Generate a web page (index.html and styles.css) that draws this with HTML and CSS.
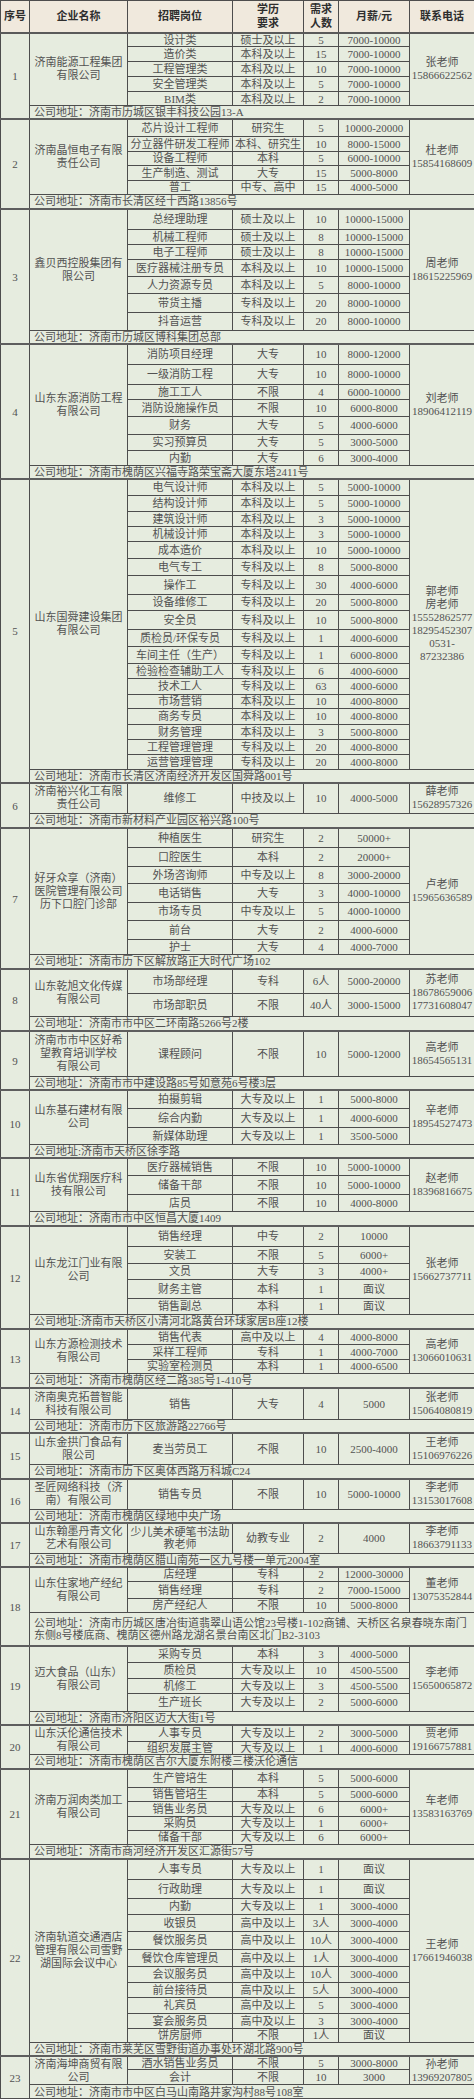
FILE: index.html
```html
<!DOCTYPE html>
<html lang="zh-CN">
<head>
<meta charset="utf-8">
<title>招聘信息</title>
<link rel="stylesheet" href="styles.css">
</head>
<body>
<table class="jobs">
<colgroup>
<col class="c-no"><col class="c-name"><col class="c-job"><col class="c-edu"><col class="c-num"><col class="c-pay"><col class="c-tel">
</colgroup>
<thead>
<tr class="h32"><th>序号</th><th>企业名称</th><th>招聘岗位</th><th>学历<br>要求</th><th>需求<br>人数</th><th>月薪/元</th><th>联系电话</th></tr>
</thead>

<tbody class="co">
<tr class="h14"><td class="no" rowspan="6">1</td><td class="name" rowspan="5">济南能源工程集团<br>有限公司</td><td>设计类</td><td>硕士及以上</td><td>5</td><td>7000-10000</td><td class="tel" rowspan="5">张老师<br>15866622562</td></tr>
<tr class="h15"><td>造价类</td><td>本科及以上</td><td>15</td><td>7000-10000</td></tr>
<tr class="h15"><td>工程管理类</td><td>本科及以上</td><td>10</td><td>7000-10000</td></tr>
<tr class="h15"><td>安全管理类</td><td>本科及以上</td><td>5</td><td>7000-10000</td></tr>
<tr class="h14"><td>BIM类</td><td>本科及以上</td><td>2</td><td>7000-10000</td></tr>
<tr class="h13"><td class="addr" colspan="6">公司地址：济南市历城区银丰科技公园13-A</td></tr>
</tbody>

<tbody class="co">
<tr class="h17"><td class="no" rowspan="6">2</td><td class="name" rowspan="5">济南晶恒电子有限<br>责任公司</td><td>芯片设计工程师</td><td>研究生</td><td>5</td><td>10000-20000</td><td class="tel" rowspan="5">杜老师<br>15854168609</td></tr>
<tr class="h15"><td>分立器件研发工程师</td><td>本科、研究生</td><td>10</td><td>8000-15000</td></tr>
<tr class="h14"><td>设备工程师</td><td>本科</td><td>5</td><td>6000-10000</td></tr>
<tr class="h15"><td>生产制造、测试</td><td>大专</td><td>15</td><td>5000-8000</td></tr>
<tr class="h14"><td>普工</td><td>中专、高中</td><td>15</td><td>4000-5000</td></tr>
<tr class="h15"><td class="addr" colspan="6">公司地址：济南市长清区经十西路13856号</td></tr>
</tbody>

<tbody class="co">
<tr class="h20"><td class="no" rowspan="8">3</td><td class="name" rowspan="7">鑫贝西控股集团有<br>限公司</td><td>总经理助理</td><td>硕士及以上</td><td>10</td><td>10000-15000</td><td class="tel" rowspan="7">周老师<br>18615225969</td></tr>
<tr class="h15"><td>机械工程师</td><td>硕士及以上</td><td>8</td><td>10000-15000</td></tr>
<tr class="h15"><td>电子工程师</td><td>硕士及以上</td><td>8</td><td>10000-15000</td></tr>
<tr class="h17"><td>医疗器械注册专员</td><td>本科及以上</td><td>10</td><td>10000-15000</td></tr>
<tr class="h17"><td>人力资源专员</td><td>本科及以上</td><td>5</td><td>8000-10000</td></tr>
<tr class="h19"><td>带货主播</td><td>专科及以上</td><td>20</td><td>8000-10000</td></tr>
<tr class="h18"><td>抖音运营</td><td>专科及以上</td><td>20</td><td>8000-10000</td></tr>
<tr class="h14"><td class="addr" colspan="6">公司地址：济南市历城区博科集团总部</td></tr>
</tbody>

<tbody class="co">
<tr class="h20"><td class="no" rowspan="8">4</td><td class="name" rowspan="7">山东东源消防工程<br>有限公司</td><td>消防项目经理</td><td>大专</td><td>10</td><td>8000-12000</td><td class="tel" rowspan="7">刘老师<br>18906412119</td></tr>
<tr class="h20"><td>一级消防工程</td><td>大专</td><td>10</td><td>8000-10000</td></tr>
<tr class="h15"><td>施工工人</td><td>不限</td><td>4</td><td>6000-10000</td></tr>
<tr class="h17"><td>消防设施操作员</td><td>不限</td><td>10</td><td>6000-8000</td></tr>
<tr class="h18"><td>财务</td><td>大专</td><td>5</td><td>4000-6000</td></tr>
<tr class="h16"><td>实习预算员</td><td>大专</td><td>5</td><td>3000-5000</td></tr>
<tr class="h15"><td>内勤</td><td>大专</td><td>6</td><td>3000-4000</td></tr>
<tr class="h14"><td class="addr" colspan="6">公司地址：济南市槐荫区兴福寺路荣宝斋大厦东塔2411号</td></tr>
</tbody>

<tbody class="co">
<tr class="h16"><td class="no" rowspan="19">5</td><td class="name" rowspan="18">山东国舜建设集团<br>有限公司</td><td>电气设计师</td><td>本科及以上</td><td>5</td><td>5000-10000</td><td class="tel" rowspan="18">郭老师<br>房老师<br>15552862577<br>18295452307<br>0531-<br>87232386</td></tr>
<tr class="h16"><td>结构设计师</td><td>本科及以上</td><td>5</td><td>5000-10000</td></tr>
<tr class="h15"><td>建筑设计师</td><td>本科及以上</td><td>3</td><td>5000-10000</td></tr>
<tr class="h15"><td>机械设计师</td><td>本科及以上</td><td>3</td><td>5000-10000</td></tr>
<tr class="h17"><td>成本造价</td><td>本科及以上</td><td>10</td><td>5000-10000</td></tr>
<tr class="h17"><td>电气专工</td><td>专科及以上</td><td>8</td><td>5000-8000</td></tr>
<tr class="h19"><td>操作工</td><td>专科及以上</td><td>30</td><td>4000-6000</td></tr>
<tr class="h16"><td>设备维修工</td><td>专科及以上</td><td>20</td><td>5000-8000</td></tr>
<tr class="h19"><td>安全员</td><td>专科及以上</td><td>10</td><td>5000-8000</td></tr>
<tr class="h17"><td>质检员/环保专员</td><td>专科及以上</td><td>1</td><td>4000-6000</td></tr>
<tr class="h17"><td>车间主任（生产）</td><td>专科及以上</td><td>1</td><td>6000-8000</td></tr>
<tr class="h15"><td>检验检查辅助工人</td><td>专科及以上</td><td>6</td><td>4000-6000</td></tr>
<tr class="h16"><td>技术工人</td><td>专科及以上</td><td>63</td><td>4000-6000</td></tr>
<tr class="h14"><td>市场营销</td><td>本科及以上</td><td>10</td><td>4000-8000</td></tr>
<tr class="h16"><td>商务专员</td><td>本科及以上</td><td>10</td><td>4000-8000</td></tr>
<tr class="h15"><td>财务管理</td><td>本科及以上</td><td>3</td><td>5000-8000</td></tr>
<tr class="h15"><td>工程管理管理</td><td>专科及以上</td><td>20</td><td>4000-8000</td></tr>
<tr class="h15"><td>运营管理管理</td><td>专科及以上</td><td>20</td><td>4000-8000</td></tr>
<tr class="h14"><td class="addr" colspan="6">公司地址：济南市长清区济南经济开发区国舜路001号</td></tr>
</tbody>

<tbody class="co">
<tr class="h30"><td class="no" rowspan="2">6</td><td class="name">济南裕兴化工有限<br>责任公司</td><td>维修工</td><td>中技及以上</td><td>10</td><td>4000-5000</td><td class="tel">薛老师<br>15628957326</td></tr>
<tr class="h15"><td class="addr" colspan="6">公司地址：济南市新材料产业园区裕兴路100号</td></tr>
</tbody>

<tbody class="co">
<tr class="h19"><td class="no" rowspan="8">7</td><td class="name" rowspan="7">好牙众享（济南）<br>医院管理有限公司<br>历下口腔门诊部</td><td>种植医生</td><td>研究生</td><td>2</td><td>50000+</td><td class="tel" rowspan="7">卢老师<br>15965636589</td></tr>
<tr class="h19"><td>口腔医生</td><td>本科</td><td>2</td><td>20000+</td></tr>
<tr class="h17"><td>外场咨询师</td><td>中专及以上</td><td>8</td><td>3000-20000</td></tr>
<tr class="h19"><td>电话销售</td><td>大专</td><td>3</td><td>4000-10000</td></tr>
<tr class="h18"><td>市场专员</td><td>中专及以上</td><td>5</td><td>4000-10000</td></tr>
<tr class="h19"><td>前台</td><td>大专</td><td>2</td><td>4000-6000</td></tr>
<tr class="h15"><td>护士</td><td>大专</td><td>4</td><td>4000-7000</td></tr>
<tr class="h15"><td class="addr" colspan="6">公司地址：济南市历下区解放路正大时代广场102</td></tr>
</tbody>

<tbody class="co">
<tr class="h24"><td class="no" rowspan="3">8</td><td class="name" rowspan="2">山东乾旭文化传媒<br>有限公司</td><td>市场部经理</td><td>专科</td><td>6人</td><td>5000-20000</td><td class="tel" rowspan="2">苏老师<br>18678659006<br>17731608047</td></tr>
<tr class="h23"><td>市场部职员</td><td>不限</td><td>40人</td><td>3000-15000</td></tr>
<tr class="h15"><td class="addr" colspan="6">公司地址：济南市市中区二环南路5266号2楼</td></tr>
</tbody>

<tbody class="co">
<tr class="h45"><td class="no" rowspan="2">9</td><td class="name">济南市市中区好希<br>望教育培训学校<br>有限公司</td><td>课程顾问</td><td>不限</td><td>10</td><td>5000-12000</td><td class="tel">高老师<br>18654565131</td></tr>
<tr class="h14"><td class="addr" colspan="6">公司地址：济南市市中建设路85号如意苑6号楼3层</td></tr>
</tbody>

<tbody class="co">
<tr class="h18"><td class="no" rowspan="4">10</td><td class="name" rowspan="3">山东基石建材有限<br>公司</td><td>拍摄剪辑</td><td>大专及以上</td><td>1</td><td>5000-8000</td><td class="tel" rowspan="3">辛老师<br>18954527473</td></tr>
<tr class="h19"><td>综合内勤</td><td>大专及以上</td><td>1</td><td>4000-6000</td></tr>
<tr class="h17"><td>新媒体助理</td><td>大专及以上</td><td>1</td><td>3500-5000</td></tr>
<tr class="h14"><td class="addr" colspan="6">公司地址:济南市天桥区徐李路</td></tr>
</tbody>

<tbody class="co">
<tr class="h17"><td class="no" rowspan="4">11</td><td class="name" rowspan="3">山东省优翔医疗科<br>技有限公司</td><td>医疗器械销售</td><td>不限</td><td>10</td><td>5000-10000</td><td class="tel" rowspan="3">赵老师<br>18396816675</td></tr>
<tr class="h19"><td>储备干部</td><td>不限</td><td>10</td><td>5000-10000</td></tr>
<tr class="h17"><td>店员</td><td>不限</td><td>10</td><td>4000-8000</td></tr>
<tr class="h15"><td class="addr" colspan="6">公司地址：济南市市中区恒昌大厦1409</td></tr>
</tbody>

<tbody class="co">
<tr class="h20"><td class="no" rowspan="6">12</td><td class="name" rowspan="5">山东龙江门业有限<br>公司</td><td>销售经理</td><td>中专</td><td>2</td><td>10000</td><td class="tel" rowspan="5">张老师<br>15662737711</td></tr>
<tr class="h17"><td>安装工</td><td>不限</td><td>5</td><td>6000+</td></tr>
<tr class="h16"><td>文员</td><td>大专</td><td>3</td><td>4000+</td></tr>
<tr class="h19"><td>财务主管</td><td>本科</td><td>1</td><td>面议</td></tr>
<tr class="h16"><td>销售副总</td><td>本科</td><td>1</td><td>面议</td></tr>
<tr class="h15"><td class="addr" colspan="6">公司地址:济南市天桥区小清河北路黄台环球家居B座12楼</td></tr>
</tbody>

<tbody class="co">
<tr class="h15"><td class="no" rowspan="4">13</td><td class="name" rowspan="3">山东方源检测技术<br>有限公司</td><td>销售代表</td><td>高中及以上</td><td>4</td><td>4000-8000</td><td class="tel" rowspan="3">高老师<br>13066010631</td></tr>
<tr class="h15"><td>采样工程师</td><td>专科</td><td>1</td><td>4000-7000</td></tr>
<tr class="h14"><td>实验室检测员</td><td>本科</td><td>1</td><td>4000-6500</td></tr>
<tr class="h15"><td class="addr" colspan="6">公司地址：济南市槐荫区经二路385号1-410号</td></tr>
</tbody>

<tbody class="co">
<tr class="h31"><td class="no" rowspan="2">14</td><td class="name">济南奥克拓普智能<br>科技有限公司</td><td>销售</td><td>大专</td><td>4</td><td>5000</td><td class="tel">张老师<br>15064080819</td></tr>
<tr class="h14"><td class="addr" colspan="6">公司地址：济南市历下区旅游路22766号</td></tr>
</tbody>

<tbody class="co">
<tr class="h31"><td class="no" rowspan="2">15</td><td class="name">山东金拱门食品有<br>限公司</td><td>麦当劳员工</td><td>不限</td><td>10</td><td>2500-4000</td><td class="tel">王老师<br>15106976226</td></tr>
<tr class="h15"><td class="addr" colspan="6">公司地址：济南市历下区奥体西路万科城C24</td></tr>
</tbody>

<tbody class="co">
<tr class="h30"><td class="no" rowspan="2">16</td><td class="name">圣匠网络科技（济<br>南）有限公司</td><td>销售专员</td><td>不限</td><td>10</td><td>5000-10000</td><td class="tel">李老师<br>13153017608</td></tr>
<tr class="h14"><td class="addr" colspan="6">公司地址：济南市槐荫区绿地中央广场</td></tr>
</tbody>

<tbody class="co">
<tr class="h30"><td class="no" rowspan="2">17</td><td class="name">山东翰墨丹青文化<br>艺术有限公司</td><td>少儿美术硬笔书法助<br>教老师</td><td>幼教专业</td><td>2</td><td>4000</td><td class="tel">李老师<br>18663791133</td></tr>
<tr class="h14"><td class="addr" colspan="6">公司地址：济南市槐荫区腊山南苑一区九号楼一单元2004室</td></tr>
</tbody>

<tbody class="co">
<tr class="h14"><td class="no" rowspan="4">18</td><td class="name" rowspan="3">山东住家地产经纪<br>有限公司</td><td>店经理</td><td>专科</td><td>2</td><td>12000-30000</td><td class="tel" rowspan="3">董老师<br>13075352844</td></tr>
<tr class="h17"><td>销售经理</td><td>专科</td><td>2</td><td>7000-15000</td></tr>
<tr class="h14"><td>房产经纪人</td><td>不限</td><td>10</td><td>5000-8000</td></tr>
<tr class="h34"><td class="addr" colspan="6">公司地址：济南市历城区唐冶街道翡翠山语公馆23号楼1-102商铺、天桥区名泉春晓东南门<br>东侧8号楼底商、槐荫区德州路龙湖名景台南区北门B2-3103</td></tr>
</tbody>

<tbody class="co">
<tr class="h16"><td class="no" rowspan="5">19</td><td class="name" rowspan="4">迈大食品（山东）<br>有限公司</td><td>采购专员</td><td>本科</td><td>3</td><td>4000-5000</td><td class="tel" rowspan="4">李老师<br>15650065872</td></tr>
<tr class="h16"><td>质检员</td><td>大专及以上</td><td>10</td><td>4500-5500</td></tr>
<tr class="h15"><td>机修工</td><td>大专及以上</td><td>3</td><td>4500-5500</td></tr>
<tr class="h18"><td>生产班长</td><td>大专及以上</td><td>2</td><td>5000-6000</td></tr>
<tr class="h14"><td class="addr" colspan="6">公司地址：济南市济阳区迈大大街1号</td></tr>
</tbody>

<tbody class="co">
<tr class="h16"><td class="no" rowspan="3">20</td><td class="name" rowspan="2">山东沃伦通信技术<br>有限公司</td><td>人事专员</td><td>大专及以上</td><td>2</td><td>3000-5000</td><td class="tel" rowspan="2">贾老师<br>19166757881</td></tr>
<tr class="h13"><td>组织发展主管</td><td>大专及以上</td><td>1</td><td>4000-6000</td></tr>
<tr class="h15"><td class="addr" colspan="6">公司地址：济南市槐荫区吉尔大厦东附楼三楼沃伦通信</td></tr>
</tbody>

<tbody class="co">
<tr class="h18"><td class="no" rowspan="6">21</td><td class="name" rowspan="5">济南万润肉类加工<br>有限公司</td><td>生产管培生</td><td>本科</td><td>5</td><td>5000-6000</td><td class="tel" rowspan="5">车老师<br>13583163769</td></tr>
<tr class="h14"><td>销售管培生</td><td>本科</td><td>5</td><td>5000-6000</td></tr>
<tr class="h15"><td>销售业务员</td><td>大专及以上</td><td>6</td><td>6000+</td></tr>
<tr class="h14"><td>采购员</td><td>大专及以上</td><td>1</td><td>6000+</td></tr>
<tr class="h14"><td>储备干部</td><td>大专及以上</td><td>6</td><td>6000+</td></tr>
<tr class="h15"><td class="addr" colspan="6">公司地址：济南市商河经济开发区汇源街57号</td></tr>
</tbody>

<tbody class="co">
<tr class="h20"><td class="no" rowspan="12">22</td><td class="name" rowspan="11">济南轨道交通酒店<br>管理有限公司雪野<br>湖国际会议中心</td><td>人事专员</td><td>大专及以上</td><td>1</td><td>面议</td><td class="tel" rowspan="11">王老师<br>17661946038</td></tr>
<tr class="h19"><td>行政助理</td><td>大专及以上</td><td>1</td><td>面议</td></tr>
<tr class="h16"><td>内勤</td><td>大专及以上</td><td>1</td><td>3000-4000</td></tr>
<tr class="h17"><td>收银员</td><td>高中及以上</td><td>3人</td><td>3000-4000</td></tr>
<tr class="h18"><td>餐饮服务员</td><td>高中及以上</td><td>10人</td><td>3000-4000</td></tr>
<tr class="h17"><td>餐饮仓库管理员</td><td>高中及以上</td><td>1人</td><td>3000-4000</td></tr>
<tr class="h16"><td>会议服务员</td><td>高中及以上</td><td>10人</td><td>3000-4000</td></tr>
<tr class="h15"><td>前台接待员</td><td>高中及以上</td><td>5人</td><td>3000-4000</td></tr>
<tr class="h16"><td>礼宾员</td><td>高中及以上</td><td>5</td><td>3000-4000</td></tr>
<tr class="h15"><td>宴会服务员</td><td>高中及以上</td><td>3</td><td>3000-4000</td></tr>
<tr class="h14"><td>饼房厨师</td><td>不限</td><td>1人</td><td>面议</td></tr>
<tr class="h14"><td class="addr" colspan="6">公司地址：济南市莱芜区雪野街道办事处环湖北路900号</td></tr>
</tbody>

<tbody class="co">
<tr class="h13"><td class="no" rowspan="3">23</td><td class="name" rowspan="2">济南海坤商贸有限<br>公司</td><td>酒水销售业务员</td><td>不限</td><td>5</td><td>3000-8000</td><td class="tel" rowspan="2">孙老师<br>13969207805</td></tr>
<tr class="h15"><td>会计</td><td>不限</td><td>10</td><td>3000</td></tr>
<tr class="h14"><td class="addr" colspan="6">公司地址：济南市市中区白马山南路井家沟村88号108室</td></tr>
</tbody>
</table>
</body>
</html>
```

FILE: styles.css
```css
html, body {
  margin: 0;
  padding: 0;
  background: #ffffff;
}

.jobs {
  width: 474px;
  table-layout: fixed;
  border-collapse: collapse;
  font-family: "Liberation Serif", "Noto Sans CJK SC", serif;
  font-size: 11px;
  line-height: 12px;
  color: #525252;
  background: #e6ecdf;
}

.c-no { width: 29px; }
.c-name { width: 98px; }
.c-job { width: 105px; }
.c-edu { width: 71px; }
.c-num { width: 35px; }
.c-pay { width: 71px; }
.c-tel { width: 65px; }

.jobs th,
.jobs td {
  border: 1px solid #4d4d4d;
  padding: 0;
  text-align: center;
  vertical-align: middle;
  white-space: nowrap;
  overflow: hidden;
}

.jobs th {
  background: #f0e9dd;
  font-weight: bold;
  color: #2e2e2e;
  line-height: 14px;
}

.jobs thead tr th {
  border-bottom: 2px solid #5a5a5a;
}

.jobs tbody.co > tr:first-child > td {
  border-top: 2px solid #5e5e5e;
}

.jobs td.addr {
  text-align: left;
  padding-left: 4px;
}

.jobs td.tel,
.jobs td.name {
  line-height: 13px;
}

.h13 { height: 13px; }
.h14 { height: 14px; }
.h15 { height: 15px; }
.h16 { height: 16px; }
.h17 { height: 17px; }
.h18 { height: 18px; }
.h19 { height: 19px; }
.h20 { height: 20px; }
.h23 { height: 23px; }
.h24 { height: 24px; }
.h30 { height: 30px; }
.h31 { height: 31px; }
.h32 { height: 32px; }
.h34 { height: 34px; }
.h45 { height: 45px; }
```
